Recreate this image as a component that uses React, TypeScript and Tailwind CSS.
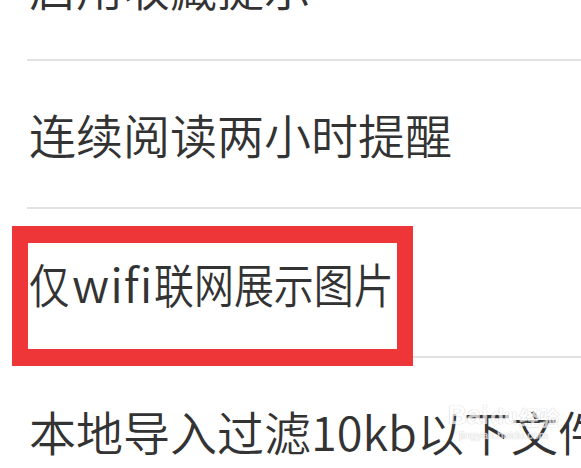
type Segment = { text: string; cls?: string };

const items: { key: string; parts: Segment[] }[] = [
  { key: 'favorite', parts: [{ text: '启用收藏提示' }] },
  { key: 'reading', parts: [{ text: '连续阅读两小时提醒' }] },
  {
    key: 'wifi',
    parts: [
      { text: '仅', cls: 'inline-block origin-left scale-x-[0.86] -mr-[7px]' },
      { text: 'wifi', cls: 'tracking-[1px] pl-[3px] pr-[1px]' },
      { text: '联网展示图片', cls: 'inline-block origin-left scale-x-[0.85]' },
    ],
  },
  { key: 'filter', parts: [{ text: '本地导入过滤10kb以下文件' }] },
];

export default function App() {
  return (
    <div className="relative h-[468px] w-[581px] overflow-hidden bg-white font-['Noto_Sans_CJK_SC','Noto_Sans',sans-serif] text-[#333333]">
      <ul className="-mt-[88px]">
        {items.map(item => (
          <li
            key={item.key}
            className="ml-[27px] flex h-[148.5px] items-center border-b-2 border-[#e2e2e2] pl-[2px] text-[47px] font-[350] leading-none whitespace-nowrap"
          >
            {item.parts.map(p => (
              <span key={p.text} className={p.cls}>{p.text}</span>
            ))}
          </li>
        ))}
      </ul>

      {/* annotation frame */}
      <div className="pointer-events-none absolute left-[12px] top-[226px] h-[140px] w-[401px] border-x-[16px] border-y-[17px] border-[#ee3538]" />

      {/* watermark */}
      <div className="pointer-events-none absolute left-[448px] top-[402px] flex flex-col items-center leading-none text-white opacity-70 [text-shadow:0_0_1px_#bbb,0_0_1px_#bbb]">
        <div className="flex items-end gap-[2px] font-['Liberation_Sans',sans-serif] text-[26px] font-bold">
          <span>Bai</span>
          <span className="text-[22px]">du</span>
          <span className="font-['Noto_Sans_CJK_SC',sans-serif] text-[20px]">经验</span>
        </div>
        <div className="mt-[2px] font-['Liberation_Sans',sans-serif] text-[11px]">jingyan.baidu.com</div>
      </div>
    </div>
  );
}
